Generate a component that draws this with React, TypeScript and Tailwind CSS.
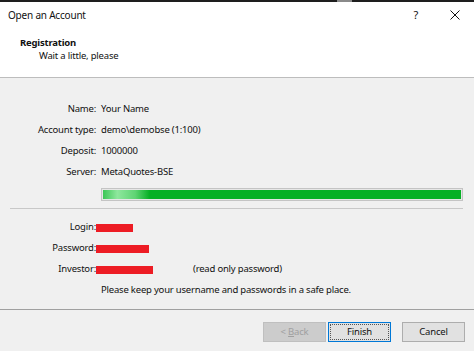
const font = { fontFamily: '"Noto Sans", "Open Sans", sans-serif' };

function InfoRow({ label, value }: { label: string; value: string }) {
  return (
    <div className="flex h-[21px] items-center">
      <span className="w-[96px] text-right">{label}</span>
      <span className="pl-[5px]">{value}</span>
    </div>
  );
}

function SecretRow({ label, width }: { label: string; width: number }) {
  return (
    <div className="flex h-[21px] items-center">
      <span className="w-[96px] text-right">{label}</span>
      <span className="h-[8px] bg-[#ed1c24]" style={{ width }} />
    </div>
  );
}

export default function App() {
  return (
    <div
      className="w-[474px] h-[351px] overflow-hidden flex flex-col bg-[#f0f0f0] text-[9.5px] tracking-[-0.2px] text-[#111]"
      style={font}
    >
      <div className="h-[2px] bg-[#1e1e1e] flex">
        <div className="ml-[337px] w-[15px] bg-[#8a8a8a]" />
      </div>

      <div className="bg-white border-b border-[#bdbdbd]">
        <div className="h-[26px] flex items-center pl-[8px] pr-[14px]">
          <span className="text-[10px]">Open an Account</span>
          <span className="ml-auto mr-[32px] text-[11px]">?</span>
          <svg width="10" height="10" viewBox="0 0 10 10">
            <path d="M0.5 0.5 L9.5 9.5 M9.5 0.5 L0.5 9.5" stroke="#111" strokeWidth="1" />
          </svg>
        </div>
        <div className="pl-[20px] pt-[8px] pb-[15px] leading-[13px]">
          <div className="font-bold">Registration</div>
          <div className="pl-[19px]">Wait a little, please</div>
        </div>
      </div>

      <div className="pt-[21px]">
        <InfoRow label="Name:" value="Your Name" />
        <InfoRow label="Account type:" value="demo\demobse (1:100)" />
        <InfoRow label="Deposit:" value="1000000" />
        <InfoRow label="Server:" value="MetaQuotes-BSE" />
        <div className="ml-[101px] mr-[11px] mt-[5px] h-[13px] border border-[#c4c4c4] bg-[#e6e6e6] p-px">
          <div className="h-full bg-[linear-gradient(90deg,#3cc656_0%,#8ee79d_4%,#5fd474_9%,#06b025_13%,#06b025_100%)]" />
        </div>
        <div className="ml-[10px] mr-[11px] mt-[7px] border-t border-[#c8c8c8]" />
      </div>

      <div className="pt-[8px] pb-[8px]">
        <SecretRow label="Login:" width={37} />
        <SecretRow label="Password:" width={53} />
        <div className="flex h-[21px] items-center">
          <span className="w-[96px] text-right">Investor:</span>
          <span className="h-[8px] w-[57px] bg-[#ed1c24]" />
          <span className="pl-[40px]">(read only password)</span>
        </div>
        <div className="flex h-[21px] items-center pl-[101px]">
          Please keep your username and passwords in a safe place.
        </div>
      </div>

      <div className="border-t border-[#a0a0a0] flex pt-[12px] pr-[9px] justify-end">
        <button className="w-[63px] h-[20px] bg-[#cccccc] border border-[#bfbfbf] text-[#a0a0a0]">
          &lt; <span className="underline">B</span>ack
        </button>
        <button className="ml-[2px] w-[63px] h-[20px] bg-[#e1e1e1] border border-[#0078d7] p-px">
          <span className="flex h-full w-full items-center justify-center border border-dotted border-[#555]">
            Finish
          </span>
        </button>
        <button className="ml-[11px] w-[63px] h-[20px] bg-[#e1e1e1] border border-[#adadad]">
          Cancel
        </button>
      </div>
    </div>
  );
}
